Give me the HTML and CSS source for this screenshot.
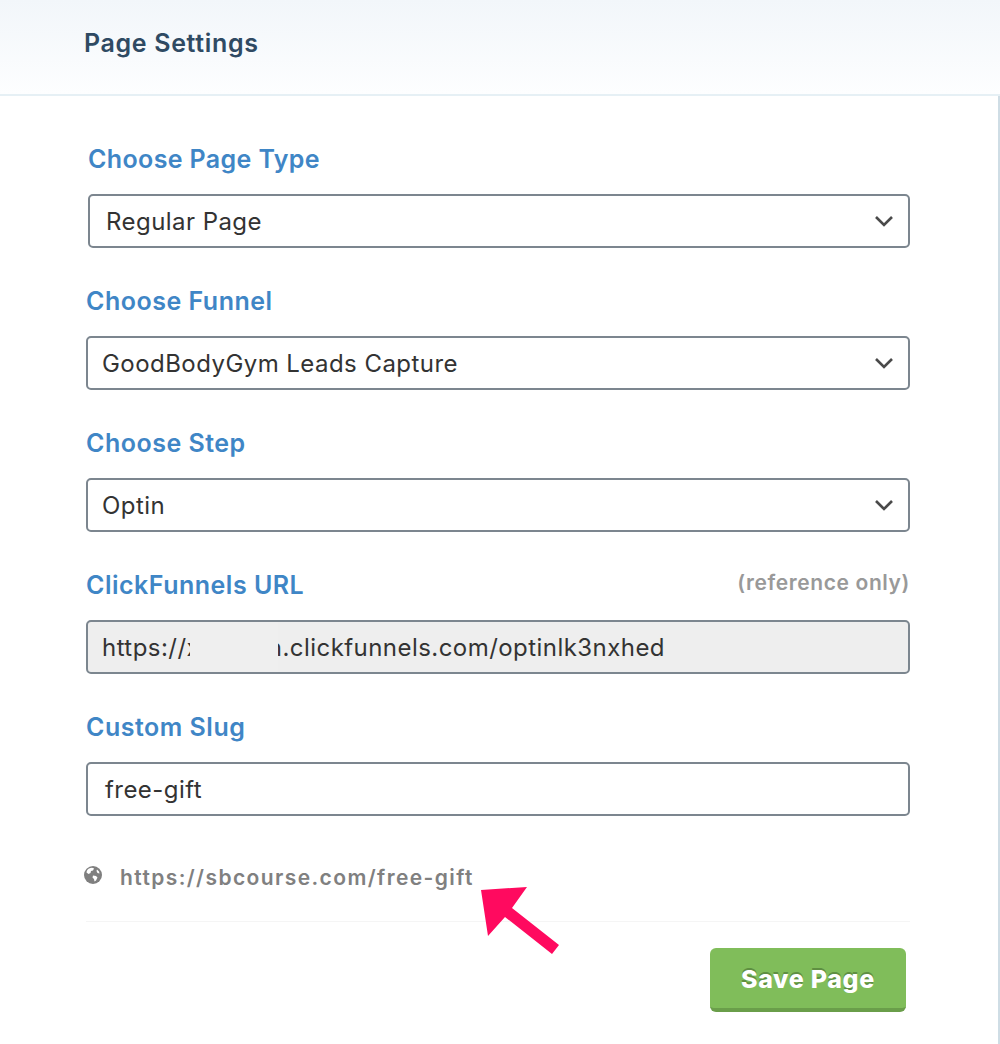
FILE: index.html
```html
<!DOCTYPE html>
<html lang="en">
<head>
    <meta charset="UTF-8">
    <meta name="viewport" content="width=device-width, initial-scale=1.0">
    <title>Page Settings</title>
    <link rel="stylesheet" href="styles.css">
</head>
<body>
    <div class="header">Page Settings</div>
    <div class="panel">
        <div class="field first">
            <label>Choose Page Type</label>
            <div class="box select">
                <span>Regular Page</span>
                <svg class="chevron" width="20" height="12" viewBox="0 0 20 12"><path d="M2 2l8 8 8-8" fill="none" stroke="#4a4a4a" stroke-width="2.6"/></svg>
            </div>
        </div>
        <div class="field">
            <label>Choose Funnel</label>
            <div class="box select">
                <span>GoodBodyGym Leads Capture</span>
                <svg class="chevron" width="20" height="12" viewBox="0 0 20 12"><path d="M2 2l8 8 8-8" fill="none" stroke="#4a4a4a" stroke-width="2.6"/></svg>
            </div>
        </div>
        <div class="field">
            <label>Choose Step</label>
            <div class="box select">
                <span>Optin</span>
                <svg class="chevron" width="20" height="12" viewBox="0 0 20 12"><path d="M2 2l8 8 8-8" fill="none" stroke="#4a4a4a" stroke-width="2.6"/></svg>
            </div>
        </div>
        <div class="field">
            <div class="label-row">
                <label>ClickFunnels URL</label>
                <span class="note">(reference only)</span>
            </div>
            <div class="box readonly">
                <span>https://xxxxxxn.clickfunnels.com/optinlk3nxhed</span>
                <div class="redact"></div>
            </div>
        </div>
        <div class="field slug">
            <label>Custom Slug</label>
            <div class="box">
                <span>free-gift</span>
            </div>
        </div>
        <div class="url-row">
            <svg class="globe" width="18" height="18" viewBox="0 0 18 18">
                <circle cx="9" cy="9" r="9" fill="#7f7f7f"/>
                <path d="M5 2.500c2-1 4-1 5 0l-1 2-2 .5-.5 2-2 1-2-1.500C2.500 5 3.500 3.500 5 2.500zM9 9.500l3 .5 1.500 1.500-1.500 3-1.500 1-.5-2.500-1.500-1.500zM13 3.500l2 2 .5 2-2-.5-1-2z" fill="#fff"/>
            </svg>
            <span>https://sbcourse.com/free-gift</span>
        </div>
        <div class="actions">
            <button class="save">Save Page</button>
        </div>
        <svg class="arrow" width="82" height="72" viewBox="0 0 82 72">
            <path d="M1 4L47 1 32 22 79 59 72 68 25 31 8 50z" fill="#ff0a5f"/>
        </svg>
    </div>
</body>
</html>
```

FILE: styles.css
```css
* {
    margin: 0px;
    padding: 0px;
    box-sizing: border-box;
}
body{
    font-family: "Inter", sans-serif;
    background: #fff;
}
.header{
    height: 96px;
    padding: 28px 0 0 84px;
    font-size: 25px;
    line-height: 30px;
    letter-spacing: 0.65px;
    font-weight: 600;
    color: #2f4a63;
    background: linear-gradient(#f2f6fa, #fdfeff);
    border-bottom: 2px solid #e6f0f5;
}
.panel{
    position: relative;
    height: 948px;
    padding: 50px 88px 0 86px;
    border-right: 2px solid #cfdde5;
}
.field{
    margin-bottom: 40px;
}
.field label{
    display: block;
    font-size: 25px;
    line-height: 26px;
    letter-spacing: 0.5px;
    font-weight: 600;
    color: #3f86c6;
}
.field.first{
    margin-left: 2px;
}
.field.first label{
    letter-spacing: 0.37px;
}
.field.slug{
    margin-bottom: 48px;
}
.label-row{
    display: flex;
    justify-content: space-between;
}
.note{
    font-size: 21px;
    line-height: 22px;
    letter-spacing: 0.6px;
    font-weight: 600;
    color: #999;
}
.box{
    position: relative;
    display: flex;
    align-items: center;
    justify-content: space-between;
    height: 54px;
    margin-top: 22px;
    padding: 0 14px;
    font-size: 24px;
    letter-spacing: 0.45px;
    color: #333;
    background: #fff;
    border: 2px solid #7c868f;
    border-radius: 5px;
    white-space: nowrap;
}
.first .box{
    padding-left: 16px;
}
.slug .box{
    padding-left: 17px;
}
.readonly{
    background: #eee;
}
.redact{
    position: absolute;
    left: 102px;
    top: 0;
    width: 88px;
    height: 50px;
    background: #efefef;
}
.url-row{
    display: flex;
    align-items: center;
    gap: 18px;
    margin-left: -2px;
    margin-top: -1px;
    height: 28px;
    font-size: 21px;
    font-weight: 600;
    letter-spacing: 1.4px;
    color: #808080;
}
.globe{
    margin-top: -4px;
}
.actions{
    margin-top: 30px;
    padding-top: 26px;
    display: flex;
    justify-content: flex-end;
    padding-right: 4px;
    border-top: 1px solid #f5f5f5;
}
.save{
    width: 196px;
    height: 64px;
    padding-top: 2px;
    font-family: inherit;
    font-size: 25px;
    font-weight: 800;
    letter-spacing: 0.7px;
    color: #fff;
    background: #80bd5a;
    border: none;
    border-bottom: 4px solid #6a9e4a;
    border-radius: 6px;
    text-shadow: 0 -2px 0 #5f8f42;
}
.arrow{
    position: absolute;
    left: 480px;
    top: 790px;
}
```
